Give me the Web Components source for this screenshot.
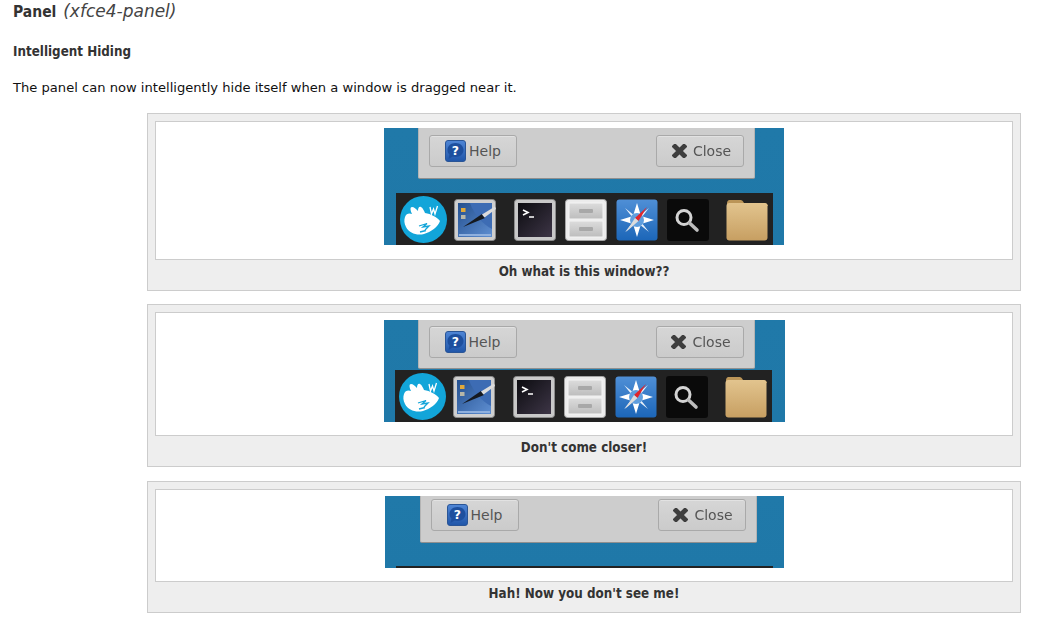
<!DOCTYPE html>
<html>
<head>
<meta charset="utf-8">
<title>Panel</title>
<style>
  html, body { margin: 0; background: #fff; }
  body { font-family: "DejaVu Sans", sans-serif; color: #111; overflow: hidden; height: 623px; }
</style>
</head>
<body>
<release-page>
  <span slot="title">Panel</span>
  <span slot="package">(xfce4-panel)</span>
  <span slot="subtitle">Intelligent Hiding</span>
  <span slot="intro">The panel can now intelligently hide itself when a window is dragged near it.</span>
  <shot-figure caption="Oh what is this window??" style="--pad-top: 6px; --pad-bottom: 14px">
    <desktop-shot w="400" h="117" win-left="34" win-width="337" win-height="51" btn-top="7" dock-left="12" dock-gap="14"></desktop-shot>
  </shot-figure>
  <shot-figure caption="Don't come closer!" style="--pad-top: 7px; --pad-bottom: 13px">
    <desktop-shot w="401" h="102" win-left="34" win-width="337" win-height="49" btn-top="6" dock-left="11" dock-gap="1"></desktop-shot>
  </shot-figure>
  <shot-figure caption="Hah! Now you don't see me!" style="--pad-top: 6px; --pad-bottom: 13px; margin-top: 1px">
    <desktop-shot w="399" h="72" win-left="35" win-width="337" win-height="47" btn-top="3" dock-left="11" dock-gap="23"></desktop-shot>
  </shot-figure>
</release-page>

<template id="page-tpl">
  <style>
    :host { display: block; padding: 0 22px 0 13px; }
    h3 { margin: 0; padding-top: 1px; line-height: 20px; font-size: 15.5px; font-weight: bold; font-stretch: condensed; color: #333; }
    h3 em { font-size: 17px; font-weight: normal; font-stretch: normal; color: #444; margin-left: 2px; }
    h4 { margin: 22px 0 0; font-size: 13.3px; font-stretch: condensed; line-height: 16px; font-weight: bold; color: #333; }
    p { margin: 20px 0 17px; font-size: 13.1px; line-height: 16px; color: #111; }
    .figures { display: flex; flex-direction: column; gap: 13px; margin-left: 134px; }
  </style>
  <h3><slot name="title"></slot> <em><slot name="package"></slot></em></h3>
  <h4><slot name="subtitle"></slot></h4>
  <p><slot name="intro"></slot></p>
  <div class="figures"><slot></slot></div>
</template>

<template id="figure-tpl">
  <style>
    :host { display: block; border: 1px solid #ccc; background: #eee; padding: 7px 7px 0; }
    .frame { border: 1px solid #ccc; background: #fff; padding: var(--pad-top) 0 var(--pad-bottom); display: flex; justify-content: center; }
    .caption { font-size: 13.3px; font-stretch: condensed; font-weight: bold; color: #333; text-align: center; line-height: 16px; padding: 4px 0 10px; }
  </style>
  <div class="frame"><slot></slot></div>
  <div class="caption"></div>
</template>

<template id="shot-tpl">
  <style>
    :host { display: block; overflow: hidden; background: linear-gradient(#2079a9, #1f78a8); }
    .inner { filter: blur(0.4px); display: flex; flex-direction: column; }
    .win {
      box-sizing: border-box; background: #cdcdcd; border: 1px solid #b4b4b4; border-top: 0;
      border-bottom: 1px solid #8f8f8f; border-radius: 0 0 2px 2px;
      display: flex; justify-content: space-between; align-items: flex-start; padding-left: 10px; padding-right: 10px;
    }
    .btn {
      box-sizing: border-box; width: 88px; height: 32px; border: 1px solid #a9a9a9; border-radius: 3px;
      background: linear-gradient(#d6d6d6, #cbcbcb); box-shadow: inset 0 1px 0 #e2e2e2;
      display: flex; align-items: center; justify-content: center; gap: 3px;
      font-family: "DejaVu Sans", sans-serif; font-size: 14px; color: #555;
    }
    .btn.close { gap: 6px; padding-left: 3px; }
    .help-icon { width: 21px; height: 22px; display: block; }
    .x-icon { width: 15px; height: 14px; display: block; }
    .help-icon text { font-family: "DejaVu Sans", sans-serif; font-weight: bold; font-size: 12.5px; fill: #fff; }
  </style>
  <div class="inner">
    <div class="win">
      <div class="btn">
        <svg class="help-icon" viewBox="0 0 21 22">
          <defs><linearGradient id="hb" x1="0" y1="0" x2="0" y2="1"><stop offset="0" stop-color="#4f86d6"/><stop offset="1" stop-color="#1f55a8"/></linearGradient></defs>
          <rect x="0.5" y="0.5" width="20" height="21" rx="2.5" fill="url(#hb)" stroke="#2a5596"/>
          <path d="M10.5 3c4.500 0 8 2.800 8 7s-3.500 7-8 7c-1 0-2-.1-2.800-.4L3.500 19l1-4.400C3 13.300 2.500 11.700 2.500 10c0-4.200 3.500-7 8-7z" fill="#1d4f9e"/>
          <text x="10.500" y="15" text-anchor="middle">?</text>
        </svg>
        <span>Help</span>
      </div>
      <div class="btn close">
        <svg class="x-icon" viewBox="0 0 15 14"><path d="M3 2.500 L12 11.500 M12 2.500 L3 11.500" stroke="#3e3e3e" stroke-width="4.800" stroke-linecap="square" fill="none"/></svg>
        <span>Close</span>
      </div>
    </div>
    <panel-dock></panel-dock>
  </div>
</template>

<template id="dock-tpl">
  <style>
    :host { display: block; box-sizing: border-box; width: 377px; height: 52px; background: #222; }
    .row { display: flex; align-items: flex-start; padding: 3px 0 0 4px; }
    svg { display: block; flex: none; width: 42px; height: 42px; margin-top: 3px; }
    svg.logo { width: 47px; height: 47px; margin-top: 0; }
    .m7 { margin-left: 7px; } .m18 { margin-left: 18px; } .m9 { margin-left: 9px; } .m17 { margin-left: 17px; }
  </style>
  <div class="row">
    <!-- xfce mouse -->
    <svg class="logo" viewBox="0 0 47 47">
      <circle cx="23.500" cy="23.500" r="23.500" fill="#12a5d9"/>
      <path d="M5 21C6 17 10 17 12 18 10 14 10 11 12 11 14 11 16 13 18 15 18 12 19 10 21 11 23 12 24 15 25 17 31 18 37 21 40 25 38 31 31 36 24 38 17 40 9 37 6 31 4 27 4 24 5 21z" fill="#fff"/>
      <path d="M30 11l1.500 7 2-5 1.500 5 2.500-8" stroke="#fff" stroke-width="1.300" fill="none"/>
      <path d="M19 30l8-2.500-4 3.500 6-1-4 4M20 36l6-1.500" stroke="#12a5d9" stroke-width="1.300" fill="none"/>
    </svg>
    <!-- settings / pen -->
    <svg class="m7" viewBox="0 0 42 42">
      <defs><linearGradient id="sb" x1="0" y1="0" x2="1" y2="1"><stop offset="0" stop-color="#24508f"/><stop offset="1" stop-color="#5f8fd2"/></linearGradient></defs>
      <rect x="0.500" y="0.500" width="41" height="41" rx="3" fill="#cfcfcf" stroke="#8c8c8c"/>
      <rect x="4" y="4" width="34" height="34" fill="url(#sb)"/>
      <path d="M16 4H38V30C30 26 20 16 16 4z" fill="#3d6cb4"/>
      <rect x="7" y="9" width="4.500" height="4" fill="#e0a93a"/>
      <rect x="7" y="16" width="4.500" height="4" fill="#b7b7a8"/>
      <path d="M9 28L28 15 31 19z" fill="#15191f"/>
      <path d="M28 15.500L41 7.500 42 10 30.500 18.500z" fill="#dcdcdc"/>
      <rect x="5" y="35" width="32" height="2" fill="#8fb0de"/>
    </svg>
    <!-- terminal -->
    <svg class="m18" viewBox="0 0 42 42">
      <defs><linearGradient id="tb" x1="0" y1="0" x2="1" y2="1"><stop offset="0" stop-color="#0c0c10"/><stop offset="1" stop-color="#3d3546"/></linearGradient></defs>
      <rect x="0.500" y="0.500" width="41" height="41" rx="3" fill="#c9c9c9" stroke="#8c8c8c"/>
      <rect x="4" y="4" width="34" height="34" fill="url(#tb)"/>
      <path d="M9 11l5 2.500-5 2.500" stroke="#fff" stroke-width="1.600" fill="none"/>
      <path d="M15 18h5" stroke="#fff" stroke-width="1.500"/>
    </svg>
    <!-- file cabinet -->
    <svg class="m9" viewBox="0 0 42 42">
      <defs><linearGradient id="db" x1="0" y1="0" x2="0" y2="1"><stop offset="0" stop-color="#dcdcdc"/><stop offset="1" stop-color="#bdbdbd"/></linearGradient></defs>
      <rect x="0.500" y="0.500" width="41" height="41" rx="3" fill="#ececec" stroke="#a5a5a5"/>
      <rect x="4" y="4" width="34" height="16" fill="url(#db)" stroke="#f4f4f4"/>
      <rect x="4" y="22" width="34" height="16" fill="url(#db)" stroke="#f4f4f4"/>
      <rect x="14" y="10" width="14" height="4" rx="1" fill="#a8a8a8"/>
      <rect x="14" y="28" width="14" height="4" rx="1" fill="#a8a8a8"/>
    </svg>
    <!-- compass -->
    <svg class="m9" viewBox="0 0 42 42">
      <defs><linearGradient id="cb" x1="0" y1="0" x2="0" y2="1"><stop offset="0" stop-color="#4f8fd6"/><stop offset="1" stop-color="#1c66b8"/></linearGradient></defs>
      <rect x="0.500" y="0.500" width="41" height="41" rx="3" fill="url(#cb)"/>
      <path d="M21 4l4 13 13 4-13 4-4 13-4-13-13-4 13-4z" fill="#fff"/>
      <path d="M9 9l10 8-2 2zM33 33l-10-8 2-2zM33 9l-8 10-2-2zM9 33l8-10 2 2z" fill="#fff" opacity=".9"/>
      <circle cx="21" cy="21" r="7" fill="#5f9ede"/>
      <path d="M31 8L19 19l3.500 3z" fill="#e1252b"/>
      <path d="M10 33l12.500-11L19 19z" fill="#dcdcdc"/>
    </svg>
    <!-- search -->
    <svg class="m9" viewBox="0 0 42 42">
      <rect x="0" y="0" width="42" height="42" rx="3" fill="#0a0a0a"/>
      <circle cx="17" cy="18.500" r="7" fill="none" stroke="#d4d4d4" stroke-width="3"/>
      <path d="M22.500 24L30 31" stroke="#bdbdbd" stroke-width="3.600" stroke-linecap="round"/>
    </svg>
    <!-- folder -->
    <svg class="m17" viewBox="0 0 42 42">
      <defs><linearGradient id="fb" x1="0" y1="0" x2="0" y2="1"><stop offset="0" stop-color="#e2c48e"/><stop offset="1" stop-color="#c79f62"/></linearGradient></defs>
      <path d="M1 4c0-1.500 1-3 2.500-3h11c1.500 0 2.500 1 3.500 3h20.500c2 0 3.500 1.500 3.500 3v0H1z" fill="#bb9558"/>
      <rect x="0.500" y="4" width="41" height="37.500" rx="3" fill="url(#fb)"/>
    </svg>
  </div>
</template>

<script>
  const cloneTpl = id => document.getElementById(id).content.cloneNode(true)

  class PanelDock extends HTMLElement {
    constructor() {
      super()
      this.attachShadow({ mode: 'open' }).appendChild(cloneTpl('dock-tpl'))
    }
  }

  class DesktopShot extends HTMLElement {
    constructor() {
      super()
      this.attachShadow({ mode: 'open' }).appendChild(cloneTpl('shot-tpl'))
    }

    connectedCallback() {
      const num = name => Number(this.getAttribute(name))
      this.style.width = num('w') + 'px'
      this.style.height = num('h') + 'px'
      const win = this.shadowRoot.querySelector('.win')
      win.style.marginLeft = num('win-left') + 'px'
      win.style.width = num('win-width') + 'px'
      win.style.height = num('win-height') + 'px'
      win.style.paddingTop = num('btn-top') + 'px'
      const dock = this.shadowRoot.querySelector('panel-dock')
      dock.style.marginLeft = num('dock-left') + 'px'
      dock.style.marginTop = num('dock-gap') + 'px'
    }
  }

  class ShotFigure extends HTMLElement {
    constructor() {
      super()
      this.attachShadow({ mode: 'open' }).appendChild(cloneTpl('figure-tpl'))
    }

    connectedCallback() {
      this.shadowRoot.querySelector('.caption').textContent = this.getAttribute('caption')
    }
  }

  class ReleasePage extends HTMLElement {
    constructor() {
      super()
      this.attachShadow({ mode: 'open' }).appendChild(cloneTpl('page-tpl'))
    }
  }

  customElements.define('panel-dock', PanelDock)
  customElements.define('desktop-shot', DesktopShot)
  customElements.define('shot-figure', ShotFigure)
  customElements.define('release-page', ReleasePage)
</script>
</body>
</html>
